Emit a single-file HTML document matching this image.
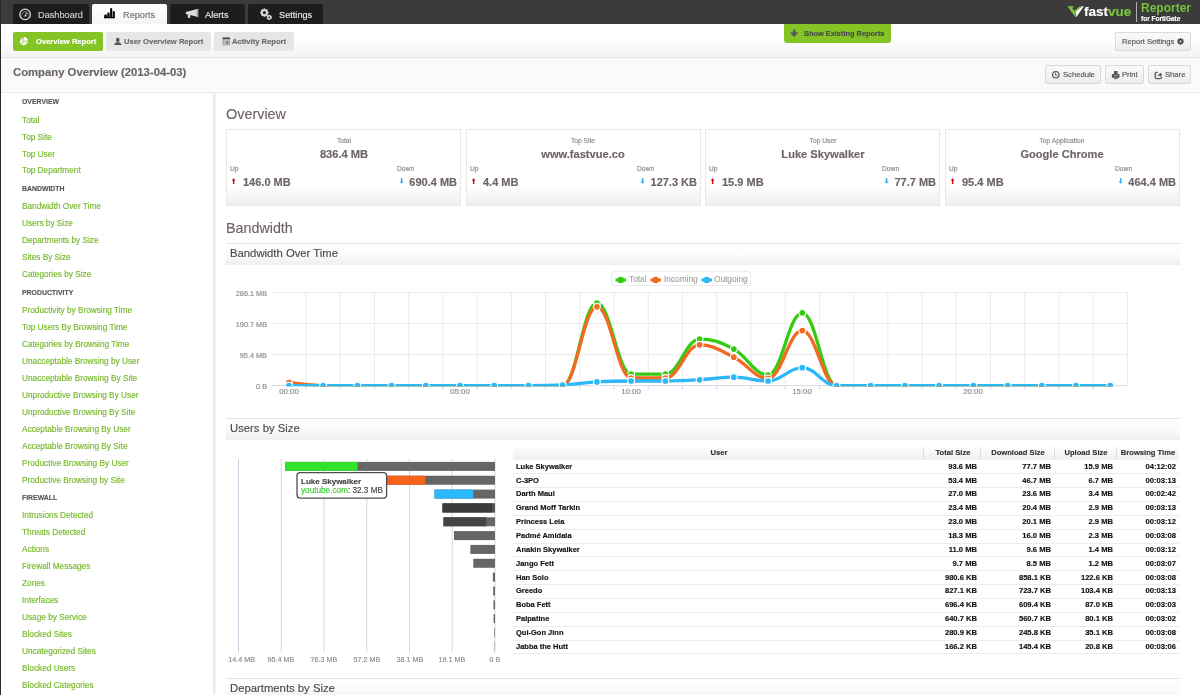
<!DOCTYPE html>
<html><head><meta charset="utf-8"><title>Fastvue Reporter</title>
<style>
html,body{margin:0;padding:0;}
body{width:1200px;height:695px;overflow:hidden;position:relative;background:#fff;font-family:"Liberation Sans", sans-serif;}
.t{position:absolute;white-space:nowrap;-webkit-text-stroke:0.15px currentColor;will-change:transform;}
.b{position:absolute;box-sizing:border-box;}
svg{position:absolute;left:0;top:0;}
</style></head><body>

<div class="b" style="left:0.00px;top:0.00px;width:1200.00px;height:24.00px;background:#3b3b3b;"></div>
<div class="b" style="left:13.00px;top:4.00px;width:76.00px;height:20.00px;background:#1d1d1d;border-radius:2px 2px 0 0;"></div>
<div class="b" style="left:92.00px;top:4.00px;width:75.00px;height:21.00px;background:linear-gradient(#ffffff,#f4f4f4);border-radius:2px 2px 0 0;"></div>
<div class="b" style="left:170.00px;top:4.00px;width:75.00px;height:20.00px;background:#1d1d1d;border-radius:2px 2px 0 0;"></div>
<div class="b" style="left:248.00px;top:4.00px;width:75.00px;height:20.00px;background:#1d1d1d;border-radius:2px 2px 0 0;"></div>
<div class="t" style="left:37.50px;top:8.77px;width:600px;font-size:9.2px;line-height:12.88px;color:#cfcfcf;font-weight:normal;text-align:left;">Dashboard</div>
<div class="t" style="left:123.00px;top:8.77px;width:600px;font-size:9.2px;line-height:12.88px;color:#7a7270;font-weight:normal;text-align:left;">Reports</div>
<div class="t" style="left:205.30px;top:8.77px;width:600px;font-size:9.2px;line-height:12.88px;color:#e6e6e6;font-weight:normal;text-align:left;">Alerts</div>
<div class="t" style="left:278.70px;top:8.77px;width:600px;font-size:9.2px;line-height:12.88px;color:#e6e6e6;font-weight:normal;text-align:left;">Settings</div>
<div class="b" style="left:0.00px;top:24.00px;width:1200.00px;height:33.50px;background:linear-gradient(#ffffff 0%,#ffffff 40%,#f3f3f3 100%);"></div>
<div class="b" style="left:0.00px;top:57.00px;width:1200.00px;height:1.00px;background:#e3e3e3;"></div>
<div class="b" style="left:12.60px;top:32.00px;width:90.60px;height:19.00px;background:#84c424;border-radius:2px;"></div>
<div class="t" style="left:35.50px;top:36.65px;width:600px;font-size:7.6px;line-height:10.64px;color:#ffffff;font-weight:bold;text-align:left;">Overview Report</div>
<div class="b" style="left:106.00px;top:32.00px;width:105.30px;height:19.00px;background:#e6e6e6;border-radius:2px;"></div>
<div class="t" style="left:124.00px;top:36.65px;width:600px;font-size:7.6px;line-height:10.64px;color:#6a6a6a;font-weight:bold;text-align:left;">User Overview Report</div>
<div class="b" style="left:214.00px;top:32.00px;width:79.70px;height:19.00px;background:#e6e6e6;border-radius:2px;"></div>
<div class="t" style="left:232.30px;top:36.65px;width:600px;font-size:7.6px;line-height:10.64px;color:#6a6a6a;font-weight:bold;text-align:left;">Activity Report</div>
<div class="b" style="left:784.00px;top:24.00px;width:106.80px;height:18.80px;background:#84c424;border-radius:0 0 3px 3px;"></div>
<div class="t" style="left:803.80px;top:29.06px;width:600px;font-size:7.4px;line-height:10.36px;color:#4a4a4a;font-weight:bold;text-align:left;">Show Existing Reports</div>
<div class="b" style="left:1115.30px;top:32.40px;width:75.50px;height:18.40px;background:linear-gradient(#fafafa,#ececec);border:1px solid #d9d9d9;border-radius:2px;"></div>
<div class="t" style="left:1121.80px;top:36.65px;width:600px;font-size:7.6px;line-height:10.64px;color:#555;font-weight:normal;text-align:left;">Report Settings</div>
<div class="b" style="left:0.00px;top:58.00px;width:1200.00px;height:34.50px;background:#fafafa;"></div>
<div class="b" style="left:0.00px;top:92.00px;width:1200.00px;height:1.00px;background:#ebebeb;"></div>
<div class="t" style="left:13.00px;top:65.27px;width:600px;font-size:11.3px;line-height:15.82px;color:#6d6563;font-weight:bold;text-align:left;">Company Overview (2013-04-03)</div>
<div class="b" style="left:1045.30px;top:65.40px;width:55.50px;height:18.40px;background:linear-gradient(#fafafa,#ececec);border:1px solid #d9d9d9;border-radius:2px;"></div>
<div class="t" style="left:1062.60px;top:69.59px;width:600px;font-size:7.65px;line-height:10.71px;color:#555;font-weight:normal;text-align:left;">Schedule</div>
<div class="b" style="left:1105.00px;top:65.40px;width:38.70px;height:18.40px;background:linear-gradient(#fafafa,#ececec);border:1px solid #d9d9d9;border-radius:2px;"></div>
<div class="t" style="left:1121.80px;top:69.59px;width:600px;font-size:7.65px;line-height:10.71px;color:#555;font-weight:normal;text-align:left;">Print</div>
<div class="b" style="left:1148.30px;top:65.40px;width:43.20px;height:18.40px;background:linear-gradient(#fafafa,#ececec);border:1px solid #d9d9d9;border-radius:2px;"></div>
<div class="t" style="left:1164.60px;top:69.59px;width:600px;font-size:7.65px;line-height:10.71px;color:#555;font-weight:normal;text-align:left;">Share</div>
<div class="b" style="left:0.00px;top:93.00px;width:213.00px;height:602.00px;background:#ffffff;"></div>
<div class="b" style="left:213.00px;top:93.00px;width:4.00px;height:602.00px;background:linear-gradient(90deg,#e3e3e3,#f1f1f1 50%,#ffffff);"></div>
<div class="b" style="left:0.00px;top:0.00px;width:1.30px;height:695.00px;background:#2a2a2a;"></div>
<div class="t" style="left:22.00px;top:97.08px;width:600px;font-size:6.9px;line-height:9.66px;color:#5a5556;font-weight:bold;text-align:left;">OVERVIEW</div>
<div class="t" style="left:22.00px;top:114.62px;width:600px;font-size:8.25px;line-height:11.55px;color:#76b82a;font-weight:normal;text-align:left;">Total</div>
<div class="t" style="left:22.00px;top:131.57px;width:600px;font-size:8.25px;line-height:11.55px;color:#76b82a;font-weight:normal;text-align:left;">Top Site</div>
<div class="t" style="left:22.00px;top:148.52px;width:600px;font-size:8.25px;line-height:11.55px;color:#76b82a;font-weight:normal;text-align:left;">Top User</div>
<div class="t" style="left:22.00px;top:165.47px;width:600px;font-size:8.25px;line-height:11.55px;color:#76b82a;font-weight:normal;text-align:left;">Top Department</div>
<div class="t" style="left:22.00px;top:183.83px;width:600px;font-size:6.9px;line-height:9.66px;color:#5a5556;font-weight:bold;text-align:left;">BANDWIDTH</div>
<div class="t" style="left:22.00px;top:201.37px;width:600px;font-size:8.25px;line-height:11.55px;color:#76b82a;font-weight:normal;text-align:left;">Bandwidth Over Time</div>
<div class="t" style="left:22.00px;top:218.32px;width:600px;font-size:8.25px;line-height:11.55px;color:#76b82a;font-weight:normal;text-align:left;">Users by Size</div>
<div class="t" style="left:22.00px;top:235.27px;width:600px;font-size:8.25px;line-height:11.55px;color:#76b82a;font-weight:normal;text-align:left;">Departments by Size</div>
<div class="t" style="left:22.00px;top:252.22px;width:600px;font-size:8.25px;line-height:11.55px;color:#76b82a;font-weight:normal;text-align:left;">Sites By Size</div>
<div class="t" style="left:22.00px;top:269.17px;width:600px;font-size:8.25px;line-height:11.55px;color:#76b82a;font-weight:normal;text-align:left;">Categories by Size</div>
<div class="t" style="left:22.00px;top:287.53px;width:600px;font-size:6.9px;line-height:9.66px;color:#5a5556;font-weight:bold;text-align:left;">PRODUCTIVITY</div>
<div class="t" style="left:22.00px;top:305.07px;width:600px;font-size:8.25px;line-height:11.55px;color:#76b82a;font-weight:normal;text-align:left;">Productivity by Browsing Time</div>
<div class="t" style="left:22.00px;top:322.02px;width:600px;font-size:8.25px;line-height:11.55px;color:#76b82a;font-weight:normal;text-align:left;">Top Users By Browsing Time</div>
<div class="t" style="left:22.00px;top:338.97px;width:600px;font-size:8.25px;line-height:11.55px;color:#76b82a;font-weight:normal;text-align:left;">Categories by Browsing Time</div>
<div class="t" style="left:22.00px;top:355.92px;width:600px;font-size:8.25px;line-height:11.55px;color:#76b82a;font-weight:normal;text-align:left;">Unacceptable Browsing by User</div>
<div class="t" style="left:22.00px;top:372.87px;width:600px;font-size:8.25px;line-height:11.55px;color:#76b82a;font-weight:normal;text-align:left;">Unacceptable Browsing By Site</div>
<div class="t" style="left:22.00px;top:389.82px;width:600px;font-size:8.25px;line-height:11.55px;color:#76b82a;font-weight:normal;text-align:left;">Unproductive Browsing By User</div>
<div class="t" style="left:22.00px;top:406.77px;width:600px;font-size:8.25px;line-height:11.55px;color:#76b82a;font-weight:normal;text-align:left;">Unproductive Browsing By Site</div>
<div class="t" style="left:22.00px;top:423.72px;width:600px;font-size:8.25px;line-height:11.55px;color:#76b82a;font-weight:normal;text-align:left;">Acceptable Browsing By User</div>
<div class="t" style="left:22.00px;top:440.67px;width:600px;font-size:8.25px;line-height:11.55px;color:#76b82a;font-weight:normal;text-align:left;">Acceptable Browsing By Site</div>
<div class="t" style="left:22.00px;top:457.62px;width:600px;font-size:8.25px;line-height:11.55px;color:#76b82a;font-weight:normal;text-align:left;">Productive Browsing By User</div>
<div class="t" style="left:22.00px;top:474.57px;width:600px;font-size:8.25px;line-height:11.55px;color:#76b82a;font-weight:normal;text-align:left;">Productive Browsing by Site</div>
<div class="t" style="left:22.00px;top:492.93px;width:600px;font-size:6.9px;line-height:9.66px;color:#5a5556;font-weight:bold;text-align:left;">FIREWALL</div>
<div class="t" style="left:22.00px;top:510.47px;width:600px;font-size:8.25px;line-height:11.55px;color:#76b82a;font-weight:normal;text-align:left;">Intrusions Detected</div>
<div class="t" style="left:22.00px;top:527.42px;width:600px;font-size:8.25px;line-height:11.55px;color:#76b82a;font-weight:normal;text-align:left;">Threats Detected</div>
<div class="t" style="left:22.00px;top:544.37px;width:600px;font-size:8.25px;line-height:11.55px;color:#76b82a;font-weight:normal;text-align:left;">Actions</div>
<div class="t" style="left:22.00px;top:561.32px;width:600px;font-size:8.25px;line-height:11.55px;color:#76b82a;font-weight:normal;text-align:left;">Firewall Messages</div>
<div class="t" style="left:22.00px;top:578.27px;width:600px;font-size:8.25px;line-height:11.55px;color:#76b82a;font-weight:normal;text-align:left;">Zones</div>
<div class="t" style="left:22.00px;top:595.22px;width:600px;font-size:8.25px;line-height:11.55px;color:#76b82a;font-weight:normal;text-align:left;">Interfaces</div>
<div class="t" style="left:22.00px;top:612.17px;width:600px;font-size:8.25px;line-height:11.55px;color:#76b82a;font-weight:normal;text-align:left;">Usage by Service</div>
<div class="t" style="left:22.00px;top:629.12px;width:600px;font-size:8.25px;line-height:11.55px;color:#76b82a;font-weight:normal;text-align:left;">Blocked Sites</div>
<div class="t" style="left:22.00px;top:646.07px;width:600px;font-size:8.25px;line-height:11.55px;color:#76b82a;font-weight:normal;text-align:left;">Uncategorized Sites</div>
<div class="t" style="left:22.00px;top:663.02px;width:600px;font-size:8.25px;line-height:11.55px;color:#76b82a;font-weight:normal;text-align:left;">Blocked Users</div>
<div class="t" style="left:22.00px;top:679.97px;width:600px;font-size:8.25px;line-height:11.55px;color:#76b82a;font-weight:normal;text-align:left;">Blocked Categories</div>
<div class="t" style="left:226.30px;top:103.73px;width:600px;font-size:14.4px;line-height:20.16px;color:#6d6563;font-weight:normal;text-align:left;">Overview</div>
<div class="b" style="left:226.00px;top:129.30px;width:235.00px;height:76.50px;background:linear-gradient(#ffffff 0%,#ffffff 74%,#efefef 100%);border:1px solid #e8e8e8;"></div>
<div class="t" style="left:243.50px;top:136.39px;width:200px;font-size:6.7px;line-height:9.38px;color:#8a8a8a;font-weight:normal;text-align:center;">Total</div>
<div class="t" style="left:233.50px;top:146.88px;width:220px;font-size:11.1px;line-height:15.54px;color:#6d6563;font-weight:bold;text-align:center;">836.4 MB</div>
<div class="t" style="left:230.00px;top:164.49px;width:600px;font-size:6.7px;line-height:9.38px;color:#8a8a8a;font-weight:normal;text-align:left;">Up</div>
<div class="t" style="left:243.20px;top:174.69px;width:600px;font-size:11.0px;line-height:15.4px;color:#6d6563;font-weight:bold;text-align:left;">146.0 MB</div>
<svg width="6" height="7" style="left:231.2px;top:177.8px"><path d="M2.6 0.2 L4.6 2.6 L3.3 2.6 L3.3 6 L1.9 6 L1.9 2.6 L0.6 2.6 Z" fill="#d40000"/></svg>
<div class="t" style="left:257.00px;top:174.69px;width:200px;font-size:11.0px;line-height:15.4px;color:#6d6563;font-weight:bold;text-align:right;">690.4 MB</div>
<div class="t" style="left:396.61px;top:164.29px;width:600px;font-size:6.7px;line-height:9.38px;color:#8a8a8a;font-weight:normal;text-align:left;">Down</div>
<svg width="6" height="7" style="left:399.2px;top:178.2px"><path d="M2.6 5.8 L4.6 3.4 L3.3 3.4 L3.3 0 L1.9 0 L1.9 3.4 L0.6 3.4 Z" fill="#35aaf0"/></svg>
<div class="b" style="left:465.50px;top:129.30px;width:235.00px;height:76.50px;background:linear-gradient(#ffffff 0%,#ffffff 74%,#efefef 100%);border:1px solid #e8e8e8;"></div>
<div class="t" style="left:483.00px;top:136.39px;width:200px;font-size:6.7px;line-height:9.38px;color:#8a8a8a;font-weight:normal;text-align:center;">Top Site</div>
<div class="t" style="left:473.00px;top:146.88px;width:220px;font-size:11.1px;line-height:15.54px;color:#6d6563;font-weight:bold;text-align:center;">www.fastvue.co</div>
<div class="t" style="left:469.50px;top:164.49px;width:600px;font-size:6.7px;line-height:9.38px;color:#8a8a8a;font-weight:normal;text-align:left;">Up</div>
<div class="t" style="left:482.70px;top:174.69px;width:600px;font-size:11.0px;line-height:15.4px;color:#6d6563;font-weight:bold;text-align:left;">4.4 MB</div>
<svg width="6" height="7" style="left:470.7px;top:177.8px"><path d="M2.6 0.2 L4.6 2.6 L3.3 2.6 L3.3 6 L1.9 6 L1.9 2.6 L0.6 2.6 Z" fill="#d40000"/></svg>
<div class="t" style="left:496.50px;top:174.69px;width:200px;font-size:11.0px;line-height:15.4px;color:#6d6563;font-weight:bold;text-align:right;">127.3 KB</div>
<div class="t" style="left:637.33px;top:164.29px;width:600px;font-size:6.7px;line-height:9.38px;color:#8a8a8a;font-weight:normal;text-align:left;">Down</div>
<svg width="6" height="7" style="left:639.9px;top:178.2px"><path d="M2.6 5.8 L4.6 3.4 L3.3 3.4 L3.3 0 L1.9 0 L1.9 3.4 L0.6 3.4 Z" fill="#35aaf0"/></svg>
<div class="b" style="left:705.00px;top:129.30px;width:235.00px;height:76.50px;background:linear-gradient(#ffffff 0%,#ffffff 74%,#efefef 100%);border:1px solid #e8e8e8;"></div>
<div class="t" style="left:722.50px;top:136.39px;width:200px;font-size:6.7px;line-height:9.38px;color:#8a8a8a;font-weight:normal;text-align:center;">Top User</div>
<div class="t" style="left:712.50px;top:146.88px;width:220px;font-size:11.1px;line-height:15.54px;color:#6d6563;font-weight:bold;text-align:center;">Luke Skywalker</div>
<div class="t" style="left:709.00px;top:164.49px;width:600px;font-size:6.7px;line-height:9.38px;color:#8a8a8a;font-weight:normal;text-align:left;">Up</div>
<div class="t" style="left:722.20px;top:174.69px;width:600px;font-size:11.0px;line-height:15.4px;color:#6d6563;font-weight:bold;text-align:left;">15.9 MB</div>
<svg width="6" height="7" style="left:710.2px;top:177.8px"><path d="M2.6 0.2 L4.6 2.6 L3.3 2.6 L3.3 6 L1.9 6 L1.9 2.6 L0.6 2.6 Z" fill="#d40000"/></svg>
<div class="t" style="left:736.00px;top:174.69px;width:200px;font-size:11.0px;line-height:15.4px;color:#6d6563;font-weight:bold;text-align:right;">77.7 MB</div>
<div class="t" style="left:881.73px;top:164.29px;width:600px;font-size:6.7px;line-height:9.38px;color:#8a8a8a;font-weight:normal;text-align:left;">Down</div>
<svg width="6" height="7" style="left:884.3px;top:178.2px"><path d="M2.6 5.8 L4.6 3.4 L3.3 3.4 L3.3 0 L1.9 0 L1.9 3.4 L0.6 3.4 Z" fill="#35aaf0"/></svg>
<div class="b" style="left:944.50px;top:129.30px;width:235.00px;height:76.50px;background:linear-gradient(#ffffff 0%,#ffffff 74%,#efefef 100%);border:1px solid #e8e8e8;"></div>
<div class="t" style="left:962.00px;top:136.39px;width:200px;font-size:6.7px;line-height:9.38px;color:#8a8a8a;font-weight:normal;text-align:center;">Top Application</div>
<div class="t" style="left:952.00px;top:146.88px;width:220px;font-size:11.1px;line-height:15.54px;color:#6d6563;font-weight:bold;text-align:center;">Google Chrome</div>
<div class="t" style="left:948.50px;top:164.49px;width:600px;font-size:6.7px;line-height:9.38px;color:#8a8a8a;font-weight:normal;text-align:left;">Up</div>
<div class="t" style="left:961.70px;top:174.69px;width:600px;font-size:11.0px;line-height:15.4px;color:#6d6563;font-weight:bold;text-align:left;">95.4 MB</div>
<svg width="6" height="7" style="left:949.7px;top:177.8px"><path d="M2.6 0.2 L4.6 2.6 L3.3 2.6 L3.3 6 L1.9 6 L1.9 2.6 L0.6 2.6 Z" fill="#d40000"/></svg>
<div class="t" style="left:975.50px;top:174.69px;width:200px;font-size:11.0px;line-height:15.4px;color:#6d6563;font-weight:bold;text-align:right;">464.4 MB</div>
<div class="t" style="left:1115.11px;top:164.29px;width:600px;font-size:6.7px;line-height:9.38px;color:#8a8a8a;font-weight:normal;text-align:left;">Down</div>
<svg width="6" height="7" style="left:1117.7px;top:178.2px"><path d="M2.6 5.8 L4.6 3.4 L3.3 3.4 L3.3 0 L1.9 0 L1.9 3.4 L0.6 3.4 Z" fill="#35aaf0"/></svg>
<div class="t" style="left:226.40px;top:218.34px;width:600px;font-size:14.3px;line-height:20.02px;color:#6d6563;font-weight:normal;text-align:left;">Bandwidth</div>
<div class="b" style="left:226.00px;top:243.40px;width:954.00px;height:21.20px;background:linear-gradient(#ffffff 0%,#fbfbfb 50%,#efefef 100%);border-top:1px solid #e4e4e4;"></div>
<div class="t" style="left:229.50px;top:245.97px;width:600px;font-size:11.3px;line-height:15.82px;color:#4a4a4a;font-weight:normal;text-align:left;">Bandwidth Over Time</div>
<div class="b" style="left:226.00px;top:418.30px;width:954.00px;height:21.40px;background:linear-gradient(#ffffff 0%,#fbfbfb 50%,#efefef 100%);border-top:1px solid #e4e4e4;"></div>
<div class="t" style="left:229.50px;top:420.87px;width:600px;font-size:11.3px;line-height:15.82px;color:#4a4a4a;font-weight:normal;text-align:left;">Users by Size</div>
<div class="b" style="left:226.00px;top:677.90px;width:954.00px;height:22.10px;background:linear-gradient(#ffffff 0%,#fbfbfb 50%,#efefef 100%);border-top:1px solid #e4e4e4;"></div>
<div class="t" style="left:229.50px;top:681.37px;width:600px;font-size:11.3px;line-height:15.82px;color:#4a4a4a;font-weight:normal;text-align:left;">Departments by Size</div>
<svg width="1200" height="695" style="left:0;top:0">
<defs><clipPath id="pc"><rect x="271.8" y="270" width="856" height="116.2"/></clipPath></defs>
<line x1="306.02" y1="292.5" x2="306.02" y2="385.6" stroke="#ebebeb" stroke-width="1"/>
<line x1="340.25" y1="292.5" x2="340.25" y2="385.6" stroke="#ebebeb" stroke-width="1"/>
<line x1="374.47" y1="292.5" x2="374.47" y2="385.6" stroke="#ebebeb" stroke-width="1"/>
<line x1="408.70" y1="292.5" x2="408.70" y2="385.6" stroke="#ebebeb" stroke-width="1"/>
<line x1="442.92" y1="292.5" x2="442.92" y2="385.6" stroke="#ebebeb" stroke-width="1"/>
<line x1="477.14" y1="292.5" x2="477.14" y2="385.6" stroke="#ebebeb" stroke-width="1"/>
<line x1="511.37" y1="292.5" x2="511.37" y2="385.6" stroke="#ebebeb" stroke-width="1"/>
<line x1="545.59" y1="292.5" x2="545.59" y2="385.6" stroke="#ebebeb" stroke-width="1"/>
<line x1="579.82" y1="292.5" x2="579.82" y2="385.6" stroke="#ebebeb" stroke-width="1"/>
<line x1="614.04" y1="292.5" x2="614.04" y2="385.6" stroke="#ebebeb" stroke-width="1"/>
<line x1="648.26" y1="292.5" x2="648.26" y2="385.6" stroke="#ebebeb" stroke-width="1"/>
<line x1="682.49" y1="292.5" x2="682.49" y2="385.6" stroke="#ebebeb" stroke-width="1"/>
<line x1="716.71" y1="292.5" x2="716.71" y2="385.6" stroke="#ebebeb" stroke-width="1"/>
<line x1="750.94" y1="292.5" x2="750.94" y2="385.6" stroke="#ebebeb" stroke-width="1"/>
<line x1="785.16" y1="292.5" x2="785.16" y2="385.6" stroke="#ebebeb" stroke-width="1"/>
<line x1="819.38" y1="292.5" x2="819.38" y2="385.6" stroke="#ebebeb" stroke-width="1"/>
<line x1="853.61" y1="292.5" x2="853.61" y2="385.6" stroke="#ebebeb" stroke-width="1"/>
<line x1="887.83" y1="292.5" x2="887.83" y2="385.6" stroke="#ebebeb" stroke-width="1"/>
<line x1="922.06" y1="292.5" x2="922.06" y2="385.6" stroke="#ebebeb" stroke-width="1"/>
<line x1="956.28" y1="292.5" x2="956.28" y2="385.6" stroke="#ebebeb" stroke-width="1"/>
<line x1="990.50" y1="292.5" x2="990.50" y2="385.6" stroke="#ebebeb" stroke-width="1"/>
<line x1="1024.73" y1="292.5" x2="1024.73" y2="385.6" stroke="#ebebeb" stroke-width="1"/>
<line x1="1058.95" y1="292.5" x2="1058.95" y2="385.6" stroke="#ebebeb" stroke-width="1"/>
<line x1="1093.18" y1="292.5" x2="1093.18" y2="385.6" stroke="#ebebeb" stroke-width="1"/>
<line x1="1127.40" y1="292.5" x2="1127.40" y2="385.6" stroke="#ebebeb" stroke-width="1"/>
<line x1="271.8" y1="292.50" x2="1127.4" y2="292.50" stroke="#ebebeb" stroke-width="1"/>
<line x1="271.8" y1="323.53" x2="1127.4" y2="323.53" stroke="#ebebeb" stroke-width="1"/>
<line x1="271.8" y1="354.57" x2="1127.4" y2="354.57" stroke="#ebebeb" stroke-width="1"/>
<line x1="271.8" y1="385.6" x2="1127.4" y2="385.6" stroke="#d0dbe6" stroke-width="1"/>
<line x1="306.02" y1="385.6" x2="306.02" y2="389.6" stroke="#d0dbe6" stroke-width="1"/>
<line x1="340.25" y1="385.6" x2="340.25" y2="389.6" stroke="#d0dbe6" stroke-width="1"/>
<line x1="374.47" y1="385.6" x2="374.47" y2="389.6" stroke="#d0dbe6" stroke-width="1"/>
<line x1="408.70" y1="385.6" x2="408.70" y2="389.6" stroke="#d0dbe6" stroke-width="1"/>
<line x1="442.92" y1="385.6" x2="442.92" y2="389.6" stroke="#d0dbe6" stroke-width="1"/>
<line x1="477.14" y1="385.6" x2="477.14" y2="389.6" stroke="#d0dbe6" stroke-width="1"/>
<line x1="511.37" y1="385.6" x2="511.37" y2="389.6" stroke="#d0dbe6" stroke-width="1"/>
<line x1="545.59" y1="385.6" x2="545.59" y2="389.6" stroke="#d0dbe6" stroke-width="1"/>
<line x1="579.82" y1="385.6" x2="579.82" y2="389.6" stroke="#d0dbe6" stroke-width="1"/>
<line x1="614.04" y1="385.6" x2="614.04" y2="389.6" stroke="#d0dbe6" stroke-width="1"/>
<line x1="648.26" y1="385.6" x2="648.26" y2="389.6" stroke="#d0dbe6" stroke-width="1"/>
<line x1="682.49" y1="385.6" x2="682.49" y2="389.6" stroke="#d0dbe6" stroke-width="1"/>
<line x1="716.71" y1="385.6" x2="716.71" y2="389.6" stroke="#d0dbe6" stroke-width="1"/>
<line x1="750.94" y1="385.6" x2="750.94" y2="389.6" stroke="#d0dbe6" stroke-width="1"/>
<line x1="785.16" y1="385.6" x2="785.16" y2="389.6" stroke="#d0dbe6" stroke-width="1"/>
<line x1="819.38" y1="385.6" x2="819.38" y2="389.6" stroke="#d0dbe6" stroke-width="1"/>
<line x1="853.61" y1="385.6" x2="853.61" y2="389.6" stroke="#d0dbe6" stroke-width="1"/>
<line x1="887.83" y1="385.6" x2="887.83" y2="389.6" stroke="#d0dbe6" stroke-width="1"/>
<line x1="922.06" y1="385.6" x2="922.06" y2="389.6" stroke="#d0dbe6" stroke-width="1"/>
<line x1="956.28" y1="385.6" x2="956.28" y2="389.6" stroke="#d0dbe6" stroke-width="1"/>
<line x1="990.50" y1="385.6" x2="990.50" y2="389.6" stroke="#d0dbe6" stroke-width="1"/>
<line x1="1024.73" y1="385.6" x2="1024.73" y2="389.6" stroke="#d0dbe6" stroke-width="1"/>
<line x1="1058.95" y1="385.6" x2="1058.95" y2="389.6" stroke="#d0dbe6" stroke-width="1"/>
<line x1="1093.18" y1="385.6" x2="1093.18" y2="389.6" stroke="#d0dbe6" stroke-width="1"/>
<g clip-path="url(#pc)">
<path d="M 288.91 383.00 C 288.91 383.00 309.45 385.60 323.14 385.60 C 336.83 385.60 343.67 385.60 357.36 385.60 C 371.05 385.60 377.89 385.60 391.58 385.60 C 405.27 385.60 412.12 385.60 425.81 385.60 C 439.50 385.60 446.34 385.60 460.03 385.60 C 473.72 385.60 480.57 385.60 494.26 385.60 C 507.95 385.60 514.79 385.60 528.48 385.60 C 542.17 385.60 549.01 385.60 562.70 385.60 C 576.39 385.60 583.24 303.00 596.93 303.00 C 610.62 303.00 617.46 374.10 631.15 374.10 C 644.84 374.10 651.69 374.10 665.38 374.10 C 679.07 374.10 685.91 339.10 699.60 339.10 C 713.29 339.10 720.13 341.92 733.82 349.10 C 747.51 356.28 754.36 375.00 768.05 375.00 C 781.74 375.00 788.58 312.80 802.27 312.80 C 815.96 312.80 822.81 385.60 836.50 385.60 C 850.19 385.60 857.03 385.60 870.72 385.60 C 884.41 385.60 891.25 385.60 904.94 385.60 C 918.63 385.60 925.48 385.60 939.17 385.60 C 952.86 385.60 959.70 385.60 973.39 385.60 C 987.08 385.60 993.93 385.60 1007.62 385.60 C 1021.31 385.60 1028.15 385.60 1041.84 385.60 C 1055.53 385.60 1062.37 385.60 1076.06 385.60 C 1089.75 385.60 1110.29 385.60 1110.29 385.60" fill="none" stroke="#33cc11" stroke-width="3.3" stroke-linejoin="round" stroke-linecap="round"/>
<circle cx="288.91" cy="383.00" r="3.4" fill="#33cc11" stroke="#fff" stroke-width="1.1"/>
<circle cx="323.14" cy="385.60" r="3.4" fill="#33cc11" stroke="#fff" stroke-width="1.1"/>
<circle cx="357.36" cy="385.60" r="3.4" fill="#33cc11" stroke="#fff" stroke-width="1.1"/>
<circle cx="391.58" cy="385.60" r="3.4" fill="#33cc11" stroke="#fff" stroke-width="1.1"/>
<circle cx="425.81" cy="385.60" r="3.4" fill="#33cc11" stroke="#fff" stroke-width="1.1"/>
<circle cx="460.03" cy="385.60" r="3.4" fill="#33cc11" stroke="#fff" stroke-width="1.1"/>
<circle cx="494.26" cy="385.60" r="3.4" fill="#33cc11" stroke="#fff" stroke-width="1.1"/>
<circle cx="528.48" cy="385.60" r="3.4" fill="#33cc11" stroke="#fff" stroke-width="1.1"/>
<circle cx="562.70" cy="385.60" r="3.4" fill="#33cc11" stroke="#fff" stroke-width="1.1"/>
<circle cx="596.93" cy="303.00" r="3.4" fill="#33cc11" stroke="#fff" stroke-width="1.1"/>
<circle cx="631.15" cy="374.10" r="3.4" fill="#33cc11" stroke="#fff" stroke-width="1.1"/>
<circle cx="665.38" cy="374.10" r="3.4" fill="#33cc11" stroke="#fff" stroke-width="1.1"/>
<circle cx="699.60" cy="339.10" r="3.4" fill="#33cc11" stroke="#fff" stroke-width="1.1"/>
<circle cx="733.82" cy="349.10" r="3.4" fill="#33cc11" stroke="#fff" stroke-width="1.1"/>
<circle cx="768.05" cy="375.00" r="3.4" fill="#33cc11" stroke="#fff" stroke-width="1.1"/>
<circle cx="802.27" cy="312.80" r="3.4" fill="#33cc11" stroke="#fff" stroke-width="1.1"/>
<circle cx="836.50" cy="385.60" r="3.4" fill="#33cc11" stroke="#fff" stroke-width="1.1"/>
<circle cx="870.72" cy="385.60" r="3.4" fill="#33cc11" stroke="#fff" stroke-width="1.1"/>
<circle cx="904.94" cy="385.60" r="3.4" fill="#33cc11" stroke="#fff" stroke-width="1.1"/>
<circle cx="939.17" cy="385.60" r="3.4" fill="#33cc11" stroke="#fff" stroke-width="1.1"/>
<circle cx="973.39" cy="385.60" r="3.4" fill="#33cc11" stroke="#fff" stroke-width="1.1"/>
<circle cx="1007.62" cy="385.60" r="3.4" fill="#33cc11" stroke="#fff" stroke-width="1.1"/>
<circle cx="1041.84" cy="385.60" r="3.4" fill="#33cc11" stroke="#fff" stroke-width="1.1"/>
<circle cx="1076.06" cy="385.60" r="3.4" fill="#33cc11" stroke="#fff" stroke-width="1.1"/>
<circle cx="1110.29" cy="385.60" r="3.4" fill="#33cc11" stroke="#fff" stroke-width="1.1"/>
<path d="M 288.91 382.50 C 288.91 382.50 309.45 385.60 323.14 385.60 C 336.83 385.60 343.67 385.60 357.36 385.60 C 371.05 385.60 377.89 385.60 391.58 385.60 C 405.27 385.60 412.12 385.60 425.81 385.60 C 439.50 385.60 446.34 385.60 460.03 385.60 C 473.72 385.60 480.57 385.60 494.26 385.60 C 507.95 385.60 514.79 385.60 528.48 385.60 C 542.17 385.60 549.01 385.60 562.70 385.60 C 576.39 385.60 583.24 306.80 596.93 306.80 C 610.62 306.80 617.46 378.00 631.15 378.00 C 644.84 378.00 651.69 378.00 665.38 378.00 C 679.07 378.00 685.91 344.80 699.60 344.80 C 713.29 344.80 720.13 350.48 733.82 357.20 C 747.51 363.92 754.36 378.40 768.05 378.40 C 781.74 378.40 788.58 330.60 802.27 330.60 C 815.96 330.60 822.81 385.60 836.50 385.60 C 850.19 385.60 857.03 385.60 870.72 385.60 C 884.41 385.60 891.25 385.60 904.94 385.60 C 918.63 385.60 925.48 385.60 939.17 385.60 C 952.86 385.60 959.70 385.60 973.39 385.60 C 987.08 385.60 993.93 385.60 1007.62 385.60 C 1021.31 385.60 1028.15 385.60 1041.84 385.60 C 1055.53 385.60 1062.37 385.60 1076.06 385.60 C 1089.75 385.60 1110.29 385.60 1110.29 385.60" fill="none" stroke="#f26a21" stroke-width="3.3" stroke-linejoin="round" stroke-linecap="round"/>
<circle cx="288.91" cy="382.50" r="3.4" fill="#f26a21" stroke="#fff" stroke-width="1.1"/>
<circle cx="323.14" cy="385.60" r="3.4" fill="#f26a21" stroke="#fff" stroke-width="1.1"/>
<circle cx="357.36" cy="385.60" r="3.4" fill="#f26a21" stroke="#fff" stroke-width="1.1"/>
<circle cx="391.58" cy="385.60" r="3.4" fill="#f26a21" stroke="#fff" stroke-width="1.1"/>
<circle cx="425.81" cy="385.60" r="3.4" fill="#f26a21" stroke="#fff" stroke-width="1.1"/>
<circle cx="460.03" cy="385.60" r="3.4" fill="#f26a21" stroke="#fff" stroke-width="1.1"/>
<circle cx="494.26" cy="385.60" r="3.4" fill="#f26a21" stroke="#fff" stroke-width="1.1"/>
<circle cx="528.48" cy="385.60" r="3.4" fill="#f26a21" stroke="#fff" stroke-width="1.1"/>
<circle cx="562.70" cy="385.60" r="3.4" fill="#f26a21" stroke="#fff" stroke-width="1.1"/>
<circle cx="596.93" cy="306.80" r="3.4" fill="#f26a21" stroke="#fff" stroke-width="1.1"/>
<circle cx="631.15" cy="378.00" r="3.4" fill="#f26a21" stroke="#fff" stroke-width="1.1"/>
<circle cx="665.38" cy="378.00" r="3.4" fill="#f26a21" stroke="#fff" stroke-width="1.1"/>
<circle cx="699.60" cy="344.80" r="3.4" fill="#f26a21" stroke="#fff" stroke-width="1.1"/>
<circle cx="733.82" cy="357.20" r="3.4" fill="#f26a21" stroke="#fff" stroke-width="1.1"/>
<circle cx="768.05" cy="378.40" r="3.4" fill="#f26a21" stroke="#fff" stroke-width="1.1"/>
<circle cx="802.27" cy="330.60" r="3.4" fill="#f26a21" stroke="#fff" stroke-width="1.1"/>
<circle cx="836.50" cy="385.60" r="3.4" fill="#f26a21" stroke="#fff" stroke-width="1.1"/>
<circle cx="870.72" cy="385.60" r="3.4" fill="#f26a21" stroke="#fff" stroke-width="1.1"/>
<circle cx="904.94" cy="385.60" r="3.4" fill="#f26a21" stroke="#fff" stroke-width="1.1"/>
<circle cx="939.17" cy="385.60" r="3.4" fill="#f26a21" stroke="#fff" stroke-width="1.1"/>
<circle cx="973.39" cy="385.60" r="3.4" fill="#f26a21" stroke="#fff" stroke-width="1.1"/>
<circle cx="1007.62" cy="385.60" r="3.4" fill="#f26a21" stroke="#fff" stroke-width="1.1"/>
<circle cx="1041.84" cy="385.60" r="3.4" fill="#f26a21" stroke="#fff" stroke-width="1.1"/>
<circle cx="1076.06" cy="385.60" r="3.4" fill="#f26a21" stroke="#fff" stroke-width="1.1"/>
<circle cx="1110.29" cy="385.60" r="3.4" fill="#f26a21" stroke="#fff" stroke-width="1.1"/>
<path d="M 288.91 385.60 C 288.91 385.60 309.45 385.60 323.14 385.60 C 336.83 385.60 343.67 385.60 357.36 385.60 C 371.05 385.60 377.89 385.60 391.58 385.60 C 405.27 385.60 412.12 385.60 425.81 385.60 C 439.50 385.60 446.34 385.60 460.03 385.60 C 473.72 385.60 480.57 385.60 494.26 385.60 C 507.95 385.60 514.79 385.60 528.48 385.60 C 542.17 385.60 549.01 385.60 562.70 385.00 C 576.39 384.40 583.24 382.70 596.93 381.90 C 610.62 381.10 617.46 381.00 631.15 381.00 C 644.84 381.00 651.69 381.00 665.38 381.00 C 679.07 381.00 685.91 380.56 699.60 379.80 C 713.29 379.04 720.13 377.20 733.82 377.20 C 747.51 377.20 754.36 381.00 768.05 381.00 C 781.74 381.00 788.58 367.70 802.27 367.70 C 815.96 367.70 822.81 385.60 836.50 385.60 C 850.19 385.60 857.03 385.60 870.72 385.60 C 884.41 385.60 891.25 385.60 904.94 385.60 C 918.63 385.60 925.48 385.60 939.17 385.60 C 952.86 385.60 959.70 385.60 973.39 385.60 C 987.08 385.60 993.93 385.60 1007.62 385.60 C 1021.31 385.60 1028.15 385.60 1041.84 385.60 C 1055.53 385.60 1062.37 385.60 1076.06 385.60 C 1089.75 385.60 1110.29 385.60 1110.29 385.60" fill="none" stroke="#2db8f5" stroke-width="3.3" stroke-linejoin="round" stroke-linecap="round"/>
<circle cx="288.91" cy="385.60" r="3.4" fill="#2db8f5" stroke="#fff" stroke-width="1.1"/>
<circle cx="323.14" cy="385.60" r="3.4" fill="#2db8f5" stroke="#fff" stroke-width="1.1"/>
<circle cx="357.36" cy="385.60" r="3.4" fill="#2db8f5" stroke="#fff" stroke-width="1.1"/>
<circle cx="391.58" cy="385.60" r="3.4" fill="#2db8f5" stroke="#fff" stroke-width="1.1"/>
<circle cx="425.81" cy="385.60" r="3.4" fill="#2db8f5" stroke="#fff" stroke-width="1.1"/>
<circle cx="460.03" cy="385.60" r="3.4" fill="#2db8f5" stroke="#fff" stroke-width="1.1"/>
<circle cx="494.26" cy="385.60" r="3.4" fill="#2db8f5" stroke="#fff" stroke-width="1.1"/>
<circle cx="528.48" cy="385.60" r="3.4" fill="#2db8f5" stroke="#fff" stroke-width="1.1"/>
<circle cx="562.70" cy="385.00" r="3.4" fill="#2db8f5" stroke="#fff" stroke-width="1.1"/>
<circle cx="596.93" cy="381.90" r="3.4" fill="#2db8f5" stroke="#fff" stroke-width="1.1"/>
<circle cx="631.15" cy="381.00" r="3.4" fill="#2db8f5" stroke="#fff" stroke-width="1.1"/>
<circle cx="665.38" cy="381.00" r="3.4" fill="#2db8f5" stroke="#fff" stroke-width="1.1"/>
<circle cx="699.60" cy="379.80" r="3.4" fill="#2db8f5" stroke="#fff" stroke-width="1.1"/>
<circle cx="733.82" cy="377.20" r="3.4" fill="#2db8f5" stroke="#fff" stroke-width="1.1"/>
<circle cx="768.05" cy="381.00" r="3.4" fill="#2db8f5" stroke="#fff" stroke-width="1.1"/>
<circle cx="802.27" cy="367.70" r="3.4" fill="#2db8f5" stroke="#fff" stroke-width="1.1"/>
<circle cx="836.50" cy="385.60" r="3.4" fill="#2db8f5" stroke="#fff" stroke-width="1.1"/>
<circle cx="870.72" cy="385.60" r="3.4" fill="#2db8f5" stroke="#fff" stroke-width="1.1"/>
<circle cx="904.94" cy="385.60" r="3.4" fill="#2db8f5" stroke="#fff" stroke-width="1.1"/>
<circle cx="939.17" cy="385.60" r="3.4" fill="#2db8f5" stroke="#fff" stroke-width="1.1"/>
<circle cx="973.39" cy="385.60" r="3.4" fill="#2db8f5" stroke="#fff" stroke-width="1.1"/>
<circle cx="1007.62" cy="385.60" r="3.4" fill="#2db8f5" stroke="#fff" stroke-width="1.1"/>
<circle cx="1041.84" cy="385.60" r="3.4" fill="#2db8f5" stroke="#fff" stroke-width="1.1"/>
<circle cx="1076.06" cy="385.60" r="3.4" fill="#2db8f5" stroke="#fff" stroke-width="1.1"/>
<circle cx="1110.29" cy="385.60" r="3.4" fill="#2db8f5" stroke="#fff" stroke-width="1.1"/>
</g>
</svg>
<div class="t" style="left:207.00px;top:288.56px;width:60px;font-size:7.3px;line-height:10.22px;color:#8a8a8a;font-weight:normal;text-align:right;">286.1 MB</div>
<div class="t" style="left:207.00px;top:319.59px;width:60px;font-size:7.3px;line-height:10.22px;color:#8a8a8a;font-weight:normal;text-align:right;">190.7 MB</div>
<div class="t" style="left:207.00px;top:350.63px;width:60px;font-size:7.3px;line-height:10.22px;color:#8a8a8a;font-weight:normal;text-align:right;">95.4 MB</div>
<div class="t" style="left:207.00px;top:381.66px;width:60px;font-size:7.3px;line-height:10.22px;color:#8a8a8a;font-weight:normal;text-align:right;">0 B</div>
<div class="t" style="left:268.91px;top:387.04px;width:40px;font-size:7.8px;line-height:10.92px;color:#8a8a8a;font-weight:normal;text-align:center;">00:00</div>
<div class="t" style="left:440.03px;top:387.04px;width:40px;font-size:7.8px;line-height:10.92px;color:#8a8a8a;font-weight:normal;text-align:center;">05:00</div>
<div class="t" style="left:611.15px;top:387.04px;width:40px;font-size:7.8px;line-height:10.92px;color:#8a8a8a;font-weight:normal;text-align:center;">10:00</div>
<div class="t" style="left:782.27px;top:387.04px;width:40px;font-size:7.8px;line-height:10.92px;color:#8a8a8a;font-weight:normal;text-align:center;">15:00</div>
<div class="t" style="left:953.39px;top:387.04px;width:40px;font-size:7.8px;line-height:10.92px;color:#8a8a8a;font-weight:normal;text-align:center;">20:00</div>
<div class="b" style="left:610.70px;top:271.40px;width:140.60px;height:14.30px;border:1px solid #ededed;border-radius:3px;background:#fff;"></div>
<svg width="12" height="8" style="left:615px;top:275.5px"><line x1="0.5" y1="4" x2="11" y2="4" stroke="#33cc11" stroke-width="3"/><circle cx="5.7" cy="4" r="3.3" fill="#33cc11"/></svg>
<div class="t" style="left:629.00px;top:274.41px;width:600px;font-size:8.3px;line-height:11.62px;color:#a3a3a3;font-weight:normal;text-align:left;">Total</div>
<svg width="12" height="8" style="left:650px;top:275.5px"><line x1="0.5" y1="4" x2="11" y2="4" stroke="#f26a21" stroke-width="3"/><circle cx="5.7" cy="4" r="3.3" fill="#f26a21"/></svg>
<div class="t" style="left:664.00px;top:274.41px;width:600px;font-size:8.3px;line-height:11.62px;color:#a3a3a3;font-weight:normal;text-align:left;">Incoming</div>
<svg width="12" height="8" style="left:701px;top:275.5px"><line x1="0.5" y1="4" x2="11" y2="4" stroke="#2db8f5" stroke-width="3"/><circle cx="5.7" cy="4" r="3.3" fill="#2db8f5"/></svg>
<div class="t" style="left:714.00px;top:274.41px;width:600px;font-size:8.3px;line-height:11.62px;color:#a3a3a3;font-weight:normal;text-align:left;">Outgoing</div>
<svg width="1200" height="695" style="left:0;top:0">
<line x1="452.25" y1="459.0" x2="452.25" y2="652.8" stroke="#d6d6d6" stroke-width="1"/>
<line x1="409.50" y1="459.0" x2="409.50" y2="652.8" stroke="#d6d6d6" stroke-width="1"/>
<line x1="366.75" y1="459.0" x2="366.75" y2="652.8" stroke="#d6d6d6" stroke-width="1"/>
<line x1="324.00" y1="459.0" x2="324.00" y2="652.8" stroke="#d6d6d6" stroke-width="1"/>
<line x1="281.25" y1="459.0" x2="281.25" y2="652.8" stroke="#d6d6d6" stroke-width="1"/>
<line x1="238.50" y1="459.0" x2="238.50" y2="652.8" stroke="#c6d3e0" stroke-width="1"/>
<line x1="495.0" y1="459.0" x2="495.0" y2="652.8" stroke="#d6d6d6" stroke-width="1"/>
<rect x="285.17" y="461.90" width="209.83" height="9" fill="#666666"/>
<rect x="285.17" y="461.90" width="72.41" height="9" fill="#33e02a"/>
<rect x="375.29" y="475.74" width="119.71" height="9" fill="#666666"/>
<rect x="375.29" y="475.74" width="49.99" height="9" fill="#f7621b"/>
<rect x="434.47" y="489.58" width="60.53" height="9" fill="#666666"/>
<rect x="434.47" y="489.58" width="38.78" height="9" fill="#2ab8ff"/>
<rect x="442.54" y="503.42" width="52.46" height="9" fill="#666666"/>
<rect x="442.54" y="503.42" width="52.46" height="9" fill="#555555"/>
<rect x="442.54" y="503.42" width="49.77" height="9" fill="#3b3b3b"/>
<rect x="443.44" y="517.26" width="51.56" height="9" fill="#666666"/>
<rect x="443.44" y="517.26" width="42.82" height="9" fill="#444444"/>
<rect x="453.98" y="531.10" width="41.02" height="9" fill="#666666"/>
<rect x="470.34" y="544.94" width="24.66" height="9" fill="#666666"/>
<rect x="473.26" y="558.78" width="21.74" height="9" fill="#666666"/>
<rect x="492.85" y="572.62" width="2.15" height="9" fill="#666666"/>
<rect x="493.19" y="586.46" width="1.81" height="9" fill="#666666"/>
<rect x="493.48" y="600.30" width="1.52" height="9" fill="#666666"/>
<rect x="493.60" y="614.14" width="1.40" height="9" fill="#666666"/>
<rect x="494.39" y="627.98" width="0.61" height="9" fill="#666666"/>
<rect x="494.64" y="641.82" width="0.36" height="9" fill="#666666"/>
<rect x="297" y="472.7" width="89.6" height="25.4" rx="3" ry="3" fill="#ffffff" stroke="#505050" stroke-width="1.3"/>
</svg>
<div class="t" style="left:300.80px;top:475.63px;width:600px;font-size:8.0px;line-height:11.2px;color:#444;font-weight:bold;text-align:left;">Luke Skywalker</div>
<div class="t" style="left:300.80px;top:484.82px;width:600px;font-size:8.2px;line-height:11.48px;color:#444;font-weight:normal;text-align:left;"><span style="color:#3ccc33">youtube.com</span>: 32.3 MB</div>
<div class="t" style="left:465.00px;top:654.67px;width:60px;font-size:7.2px;line-height:10.08px;color:#8a8a8a;font-weight:normal;text-align:center;">0 B</div>
<div class="t" style="left:422.25px;top:654.67px;width:60px;font-size:7.2px;line-height:10.08px;color:#8a8a8a;font-weight:normal;text-align:center;">19.1 MB</div>
<div class="t" style="left:379.50px;top:654.67px;width:60px;font-size:7.2px;line-height:10.08px;color:#8a8a8a;font-weight:normal;text-align:center;">38.1 MB</div>
<div class="t" style="left:336.75px;top:654.67px;width:60px;font-size:7.2px;line-height:10.08px;color:#8a8a8a;font-weight:normal;text-align:center;">57.2 MB</div>
<div class="t" style="left:294.00px;top:654.67px;width:60px;font-size:7.2px;line-height:10.08px;color:#8a8a8a;font-weight:normal;text-align:center;">76.3 MB</div>
<div class="t" style="left:251.25px;top:654.67px;width:60px;font-size:7.2px;line-height:10.08px;color:#8a8a8a;font-weight:normal;text-align:center;">95.4 MB</div>
<div class="t" style="left:209.50px;top:654.67px;width:60px;font-size:7.2px;line-height:10.08px;color:#8a8a8a;font-weight:normal;text-align:center;clip-path:inset(0 0 0 18.10px);">114.4 MB</div>
<div class="b" style="left:513.00px;top:446.50px;width:666.00px;height:13.50px;background:linear-gradient(#fdfdfd,#efefef);"></div>
<div class="b" style="left:923.40px;top:446.50px;width:1.00px;height:13.50px;background:#dedede;"></div>
<div class="b" style="left:979.70px;top:446.50px;width:1.00px;height:13.50px;background:#dedede;"></div>
<div class="b" style="left:1053.50px;top:446.50px;width:1.00px;height:13.50px;background:#dedede;"></div>
<div class="b" style="left:1115.80px;top:446.50px;width:1.00px;height:13.50px;background:#dedede;"></div>
<div class="t" style="left:619.20px;top:447.65px;width:200px;font-size:7.6px;line-height:10.64px;color:#333;font-weight:bold;text-align:center;">User</div>
<div class="t" style="left:852.55px;top:447.65px;width:200px;font-size:7.6px;line-height:10.64px;color:#333;font-weight:bold;text-align:center;">Total Size</div>
<div class="t" style="left:917.60px;top:447.65px;width:200px;font-size:7.6px;line-height:10.64px;color:#333;font-weight:bold;text-align:center;">Download Size</div>
<div class="t" style="left:985.65px;top:447.65px;width:200px;font-size:7.6px;line-height:10.64px;color:#333;font-weight:bold;text-align:center;">Upload Size</div>
<div class="t" style="left:1048.40px;top:447.65px;width:200px;font-size:7.6px;line-height:10.64px;color:#333;font-weight:bold;text-align:center;">Browsing Time</div>
<div class="b" style="left:513.00px;top:473.30px;width:666.00px;height:1.00px;background:#ececec;"></div>
<div class="t" style="left:515.80px;top:461.75px;width:600px;font-size:7.5px;line-height:10.5px;color:#111;font-weight:bold;text-align:left;">Luke Skywalker</div>
<div class="t" style="left:896.90px;top:461.65px;width:80px;font-size:7.6px;line-height:10.64px;color:#111;font-weight:bold;text-align:right;">93.6 MB</div>
<div class="t" style="left:970.70px;top:461.65px;width:80px;font-size:7.6px;line-height:10.64px;color:#111;font-weight:bold;text-align:right;">77.7 MB</div>
<div class="t" style="left:1033.00px;top:461.65px;width:80px;font-size:7.6px;line-height:10.64px;color:#111;font-weight:bold;text-align:right;">15.9 MB</div>
<div class="t" style="left:1096.20px;top:461.65px;width:80px;font-size:7.6px;line-height:10.64px;color:#111;font-weight:bold;text-align:right;">04:12:02</div>
<div class="b" style="left:513.00px;top:487.16px;width:666.00px;height:1.00px;background:#ececec;"></div>
<div class="t" style="left:515.80px;top:475.61px;width:600px;font-size:7.5px;line-height:10.5px;color:#111;font-weight:bold;text-align:left;">C-3PO</div>
<div class="t" style="left:896.90px;top:475.51px;width:80px;font-size:7.6px;line-height:10.64px;color:#111;font-weight:bold;text-align:right;">53.4 MB</div>
<div class="t" style="left:970.70px;top:475.51px;width:80px;font-size:7.6px;line-height:10.64px;color:#111;font-weight:bold;text-align:right;">46.7 MB</div>
<div class="t" style="left:1033.00px;top:475.51px;width:80px;font-size:7.6px;line-height:10.64px;color:#111;font-weight:bold;text-align:right;">6.7 MB</div>
<div class="t" style="left:1096.20px;top:475.51px;width:80px;font-size:7.6px;line-height:10.64px;color:#111;font-weight:bold;text-align:right;">00:03:13</div>
<div class="b" style="left:513.00px;top:501.02px;width:666.00px;height:1.00px;background:#ececec;"></div>
<div class="t" style="left:515.80px;top:489.47px;width:600px;font-size:7.5px;line-height:10.5px;color:#111;font-weight:bold;text-align:left;">Darth Maul</div>
<div class="t" style="left:896.90px;top:489.37px;width:80px;font-size:7.6px;line-height:10.64px;color:#111;font-weight:bold;text-align:right;">27.0 MB</div>
<div class="t" style="left:970.70px;top:489.37px;width:80px;font-size:7.6px;line-height:10.64px;color:#111;font-weight:bold;text-align:right;">23.6 MB</div>
<div class="t" style="left:1033.00px;top:489.37px;width:80px;font-size:7.6px;line-height:10.64px;color:#111;font-weight:bold;text-align:right;">3.4 MB</div>
<div class="t" style="left:1096.20px;top:489.37px;width:80px;font-size:7.6px;line-height:10.64px;color:#111;font-weight:bold;text-align:right;">00:02:42</div>
<div class="b" style="left:513.00px;top:514.88px;width:666.00px;height:1.00px;background:#ececec;"></div>
<div class="t" style="left:515.80px;top:503.33px;width:600px;font-size:7.5px;line-height:10.5px;color:#111;font-weight:bold;text-align:left;">Grand Moff Tarkin</div>
<div class="t" style="left:896.90px;top:503.23px;width:80px;font-size:7.6px;line-height:10.64px;color:#111;font-weight:bold;text-align:right;">23.4 MB</div>
<div class="t" style="left:970.70px;top:503.23px;width:80px;font-size:7.6px;line-height:10.64px;color:#111;font-weight:bold;text-align:right;">20.4 MB</div>
<div class="t" style="left:1033.00px;top:503.23px;width:80px;font-size:7.6px;line-height:10.64px;color:#111;font-weight:bold;text-align:right;">2.9 MB</div>
<div class="t" style="left:1096.20px;top:503.23px;width:80px;font-size:7.6px;line-height:10.64px;color:#111;font-weight:bold;text-align:right;">00:03:13</div>
<div class="b" style="left:513.00px;top:528.74px;width:666.00px;height:1.00px;background:#ececec;"></div>
<div class="t" style="left:515.80px;top:517.19px;width:600px;font-size:7.5px;line-height:10.5px;color:#111;font-weight:bold;text-align:left;">Princess Leia</div>
<div class="t" style="left:896.90px;top:517.09px;width:80px;font-size:7.6px;line-height:10.64px;color:#111;font-weight:bold;text-align:right;">23.0 MB</div>
<div class="t" style="left:970.70px;top:517.09px;width:80px;font-size:7.6px;line-height:10.64px;color:#111;font-weight:bold;text-align:right;">20.1 MB</div>
<div class="t" style="left:1033.00px;top:517.09px;width:80px;font-size:7.6px;line-height:10.64px;color:#111;font-weight:bold;text-align:right;">2.9 MB</div>
<div class="t" style="left:1096.20px;top:517.09px;width:80px;font-size:7.6px;line-height:10.64px;color:#111;font-weight:bold;text-align:right;">00:03:12</div>
<div class="b" style="left:513.00px;top:542.60px;width:666.00px;height:1.00px;background:#ececec;"></div>
<div class="t" style="left:515.80px;top:531.05px;width:600px;font-size:7.5px;line-height:10.5px;color:#111;font-weight:bold;text-align:left;">Padmé Amidala</div>
<div class="t" style="left:896.90px;top:530.95px;width:80px;font-size:7.6px;line-height:10.64px;color:#111;font-weight:bold;text-align:right;">18.3 MB</div>
<div class="t" style="left:970.70px;top:530.95px;width:80px;font-size:7.6px;line-height:10.64px;color:#111;font-weight:bold;text-align:right;">16.0 MB</div>
<div class="t" style="left:1033.00px;top:530.95px;width:80px;font-size:7.6px;line-height:10.64px;color:#111;font-weight:bold;text-align:right;">2.3 MB</div>
<div class="t" style="left:1096.20px;top:530.95px;width:80px;font-size:7.6px;line-height:10.64px;color:#111;font-weight:bold;text-align:right;">00:03:08</div>
<div class="b" style="left:513.00px;top:556.46px;width:666.00px;height:1.00px;background:#ececec;"></div>
<div class="t" style="left:515.80px;top:544.91px;width:600px;font-size:7.5px;line-height:10.5px;color:#111;font-weight:bold;text-align:left;">Anakin Skywalker</div>
<div class="t" style="left:896.90px;top:544.81px;width:80px;font-size:7.6px;line-height:10.64px;color:#111;font-weight:bold;text-align:right;">11.0 MB</div>
<div class="t" style="left:970.70px;top:544.81px;width:80px;font-size:7.6px;line-height:10.64px;color:#111;font-weight:bold;text-align:right;">9.6 MB</div>
<div class="t" style="left:1033.00px;top:544.81px;width:80px;font-size:7.6px;line-height:10.64px;color:#111;font-weight:bold;text-align:right;">1.4 MB</div>
<div class="t" style="left:1096.20px;top:544.81px;width:80px;font-size:7.6px;line-height:10.64px;color:#111;font-weight:bold;text-align:right;">00:03:12</div>
<div class="b" style="left:513.00px;top:570.32px;width:666.00px;height:1.00px;background:#ececec;"></div>
<div class="t" style="left:515.80px;top:558.77px;width:600px;font-size:7.5px;line-height:10.5px;color:#111;font-weight:bold;text-align:left;">Jango Fett</div>
<div class="t" style="left:896.90px;top:558.67px;width:80px;font-size:7.6px;line-height:10.64px;color:#111;font-weight:bold;text-align:right;">9.7 MB</div>
<div class="t" style="left:970.70px;top:558.67px;width:80px;font-size:7.6px;line-height:10.64px;color:#111;font-weight:bold;text-align:right;">8.5 MB</div>
<div class="t" style="left:1033.00px;top:558.67px;width:80px;font-size:7.6px;line-height:10.64px;color:#111;font-weight:bold;text-align:right;">1.2 MB</div>
<div class="t" style="left:1096.20px;top:558.67px;width:80px;font-size:7.6px;line-height:10.64px;color:#111;font-weight:bold;text-align:right;">00:03:07</div>
<div class="b" style="left:513.00px;top:584.18px;width:666.00px;height:1.00px;background:#ececec;"></div>
<div class="t" style="left:515.80px;top:572.63px;width:600px;font-size:7.5px;line-height:10.5px;color:#111;font-weight:bold;text-align:left;">Han Solo</div>
<div class="t" style="left:896.90px;top:572.53px;width:80px;font-size:7.6px;line-height:10.64px;color:#111;font-weight:bold;text-align:right;">980.6 KB</div>
<div class="t" style="left:970.70px;top:572.53px;width:80px;font-size:7.6px;line-height:10.64px;color:#111;font-weight:bold;text-align:right;">858.1 KB</div>
<div class="t" style="left:1033.00px;top:572.53px;width:80px;font-size:7.6px;line-height:10.64px;color:#111;font-weight:bold;text-align:right;">122.6 KB</div>
<div class="t" style="left:1096.20px;top:572.53px;width:80px;font-size:7.6px;line-height:10.64px;color:#111;font-weight:bold;text-align:right;">00:03:08</div>
<div class="b" style="left:513.00px;top:598.04px;width:666.00px;height:1.00px;background:#ececec;"></div>
<div class="t" style="left:515.80px;top:586.49px;width:600px;font-size:7.5px;line-height:10.5px;color:#111;font-weight:bold;text-align:left;">Greedo</div>
<div class="t" style="left:896.90px;top:586.39px;width:80px;font-size:7.6px;line-height:10.64px;color:#111;font-weight:bold;text-align:right;">827.1 KB</div>
<div class="t" style="left:970.70px;top:586.39px;width:80px;font-size:7.6px;line-height:10.64px;color:#111;font-weight:bold;text-align:right;">723.7 KB</div>
<div class="t" style="left:1033.00px;top:586.39px;width:80px;font-size:7.6px;line-height:10.64px;color:#111;font-weight:bold;text-align:right;">103.4 KB</div>
<div class="t" style="left:1096.20px;top:586.39px;width:80px;font-size:7.6px;line-height:10.64px;color:#111;font-weight:bold;text-align:right;">00:03:13</div>
<div class="b" style="left:513.00px;top:611.90px;width:666.00px;height:1.00px;background:#ececec;"></div>
<div class="t" style="left:515.80px;top:600.35px;width:600px;font-size:7.5px;line-height:10.5px;color:#111;font-weight:bold;text-align:left;">Boba Fett</div>
<div class="t" style="left:896.90px;top:600.25px;width:80px;font-size:7.6px;line-height:10.64px;color:#111;font-weight:bold;text-align:right;">696.4 KB</div>
<div class="t" style="left:970.70px;top:600.25px;width:80px;font-size:7.6px;line-height:10.64px;color:#111;font-weight:bold;text-align:right;">609.4 KB</div>
<div class="t" style="left:1033.00px;top:600.25px;width:80px;font-size:7.6px;line-height:10.64px;color:#111;font-weight:bold;text-align:right;">87.0 KB</div>
<div class="t" style="left:1096.20px;top:600.25px;width:80px;font-size:7.6px;line-height:10.64px;color:#111;font-weight:bold;text-align:right;">00:03:03</div>
<div class="b" style="left:513.00px;top:625.76px;width:666.00px;height:1.00px;background:#ececec;"></div>
<div class="t" style="left:515.80px;top:614.21px;width:600px;font-size:7.5px;line-height:10.5px;color:#111;font-weight:bold;text-align:left;">Palpatine</div>
<div class="t" style="left:896.90px;top:614.11px;width:80px;font-size:7.6px;line-height:10.64px;color:#111;font-weight:bold;text-align:right;">640.7 KB</div>
<div class="t" style="left:970.70px;top:614.11px;width:80px;font-size:7.6px;line-height:10.64px;color:#111;font-weight:bold;text-align:right;">560.7 KB</div>
<div class="t" style="left:1033.00px;top:614.11px;width:80px;font-size:7.6px;line-height:10.64px;color:#111;font-weight:bold;text-align:right;">80.1 KB</div>
<div class="t" style="left:1096.20px;top:614.11px;width:80px;font-size:7.6px;line-height:10.64px;color:#111;font-weight:bold;text-align:right;">00:03:02</div>
<div class="b" style="left:513.00px;top:639.62px;width:666.00px;height:1.00px;background:#ececec;"></div>
<div class="t" style="left:515.80px;top:628.07px;width:600px;font-size:7.5px;line-height:10.5px;color:#111;font-weight:bold;text-align:left;">Qui-Gon Jinn</div>
<div class="t" style="left:896.90px;top:627.97px;width:80px;font-size:7.6px;line-height:10.64px;color:#111;font-weight:bold;text-align:right;">280.9 KB</div>
<div class="t" style="left:970.70px;top:627.97px;width:80px;font-size:7.6px;line-height:10.64px;color:#111;font-weight:bold;text-align:right;">245.8 KB</div>
<div class="t" style="left:1033.00px;top:627.97px;width:80px;font-size:7.6px;line-height:10.64px;color:#111;font-weight:bold;text-align:right;">35.1 KB</div>
<div class="t" style="left:1096.20px;top:627.97px;width:80px;font-size:7.6px;line-height:10.64px;color:#111;font-weight:bold;text-align:right;">00:03:08</div>
<div class="b" style="left:513.00px;top:653.48px;width:666.00px;height:1.00px;background:#ececec;"></div>
<div class="t" style="left:515.80px;top:641.93px;width:600px;font-size:7.5px;line-height:10.5px;color:#111;font-weight:bold;text-align:left;">Jabba the Hutt</div>
<div class="t" style="left:896.90px;top:641.83px;width:80px;font-size:7.6px;line-height:10.64px;color:#111;font-weight:bold;text-align:right;">166.2 KB</div>
<div class="t" style="left:970.70px;top:641.83px;width:80px;font-size:7.6px;line-height:10.64px;color:#111;font-weight:bold;text-align:right;">145.4 KB</div>
<div class="t" style="left:1033.00px;top:641.83px;width:80px;font-size:7.6px;line-height:10.64px;color:#111;font-weight:bold;text-align:right;">20.8 KB</div>
<div class="t" style="left:1096.20px;top:641.83px;width:80px;font-size:7.6px;line-height:10.64px;color:#111;font-weight:bold;text-align:right;">00:03:06</div>
<svg width="1200" height="695" style="left:0;top:0"><circle cx="25.1" cy="14.4" r="5.3" fill="none" stroke="#dedede" stroke-width="1.25"/>
<path d="M21.2 16.6 A4.1 4.1 0 1 1 29 16.6 Z" fill="#4a4a4a"/>
<path d="M22.6 16.4 A2.7 2.7 0 1 1 27.6 16.4 Z" fill="#1d1d1d"/>
<path d="M22 13.2 L23 13.8 M23.3 11.4 L23.9 12.4 M25.1 10.8 V11.9 M26.9 11.4 L26.3 12.4 M28.2 13.2 L27.2 13.8" stroke="#aaa" stroke-width="0.7"/>
<path d="M24.2 16.3 L26.9 12.1 L26 16.6 Z" fill="#f0f0f0"/>
<path d="M104 16.9 H115 V18.2 H104 Z" fill="#000"/>
<rect x="104.3" y="14.5" width="2.60" height="3.70" rx="1" fill="#000"/>
<rect x="107.3" y="12.6" width="2.30" height="5.60" rx="1" fill="#000"/>
<rect x="110.1" y="8.0" width="2.10" height="10.20" rx="1" fill="#000"/>
<rect x="112.7" y="10.9" width="2.10" height="7.30" rx="1" fill="#000"/>
<path d="M185.8 11.9 L198.2 8.7 L198.2 17 L185.8 13.9 Z" fill="#dcdcdc"/>
<path d="M187.6 13.3 L190.2 13.9 L190.2 18 L188 18 Z" fill="#dcdcdc"/>
<rect x="196.6" y="9" width="1.6" height="7.8" fill="#a8a8a8"/>
<rect x="263.65" y="8.60" width="1.5" height="8.00" fill="#dcdcdc" transform="rotate(0.0 264.4 12.6)"/><rect x="263.65" y="8.60" width="1.5" height="8.00" fill="#dcdcdc" transform="rotate(45.0 264.4 12.6)"/><rect x="263.65" y="8.60" width="1.5" height="8.00" fill="#dcdcdc" transform="rotate(90.0 264.4 12.6)"/><rect x="263.65" y="8.60" width="1.5" height="8.00" fill="#dcdcdc" transform="rotate(135.0 264.4 12.6)"/><rect x="263.65" y="8.60" width="1.5" height="8.00" fill="#dcdcdc" transform="rotate(180.0 264.4 12.6)"/><rect x="263.65" y="8.60" width="1.5" height="8.00" fill="#dcdcdc" transform="rotate(225.0 264.4 12.6)"/><rect x="263.65" y="8.60" width="1.5" height="8.00" fill="#dcdcdc" transform="rotate(270.0 264.4 12.6)"/><rect x="263.65" y="8.60" width="1.5" height="8.00" fill="#dcdcdc" transform="rotate(315.0 264.4 12.6)"/><circle cx="264.4" cy="12.6" r="3.4" fill="#dcdcdc"/><circle cx="264.4" cy="12.6" r="1.55" fill="#1d1d1d"/>
<rect x="268.45" y="14.90" width="1.5" height="5.00" fill="#dcdcdc" transform="rotate(0.0 269.2 17.4)"/><rect x="268.45" y="14.90" width="1.5" height="5.00" fill="#dcdcdc" transform="rotate(60.0 269.2 17.4)"/><rect x="268.45" y="14.90" width="1.5" height="5.00" fill="#dcdcdc" transform="rotate(120.0 269.2 17.4)"/><rect x="268.45" y="14.90" width="1.5" height="5.00" fill="#dcdcdc" transform="rotate(180.0 269.2 17.4)"/><rect x="268.45" y="14.90" width="1.5" height="5.00" fill="#dcdcdc" transform="rotate(240.0 269.2 17.4)"/><rect x="268.45" y="14.90" width="1.5" height="5.00" fill="#dcdcdc" transform="rotate(300.0 269.2 17.4)"/><circle cx="269.2" cy="17.4" r="2.1" fill="#dcdcdc"/><circle cx="269.2" cy="17.4" r="0.9" fill="#1d1d1d"/>
<path d="M23.9 40.8 L23.9 37 A3.9 3.9 0 0 1 27.8 40.8 Z" fill="#fff"/>
<path d="M23.3 41.4 L26.9 43.6 A3.9 3.9 0 1 1 23.3 37.5 Z" fill="#fff"/>
<path d="M23.3 41.4 L27.8 41.4 A3.9 3.9 0 0 1 26.9 43.6 Z" fill="#fff"/>
<path d="M22.2 38.8 L20.6 40.8 M23.3 41.4 L21.8 44" stroke="#84c424" stroke-width="0.9"/>
<ellipse cx="117.8" cy="39.9" rx="1.8" ry="2.2" fill="#555"/>
<path d="M114 45 Q114.6 42.9 116.6 42.3 L119 42.3 Q121.1 42.9 121.7 45 Z" fill="#555"/>
<rect x="222.6" y="37.6" width="7.3" height="7.7" rx="0.8" fill="#9a9a9a"/>
<rect x="222.6" y="37.6" width="7.3" height="1.5" fill="#444"/>
<rect x="223.5" y="39.5" width="5.5" height="4.9" fill="#bdbdbd"/>
<rect x="226.3" y="41.2" width="1.8" height="2.2" fill="#666"/>
<path d="M793.1 29.8 H795.2 V32.6 L798 32.6 L794.15 36.9 L790.3 32.6 L793.1 32.6 Z" fill="#555566" stroke="#555566" stroke-width="0.3" stroke-linejoin="round"/>
<rect x="1179.75" y="38.30" width="1.5" height="6.20" fill="#484848" transform="rotate(0.0 1180.5 41.4)"/><rect x="1179.75" y="38.30" width="1.5" height="6.20" fill="#484848" transform="rotate(45.0 1180.5 41.4)"/><rect x="1179.75" y="38.30" width="1.5" height="6.20" fill="#484848" transform="rotate(90.0 1180.5 41.4)"/><rect x="1179.75" y="38.30" width="1.5" height="6.20" fill="#484848" transform="rotate(135.0 1180.5 41.4)"/><rect x="1179.75" y="38.30" width="1.5" height="6.20" fill="#484848" transform="rotate(180.0 1180.5 41.4)"/><rect x="1179.75" y="38.30" width="1.5" height="6.20" fill="#484848" transform="rotate(225.0 1180.5 41.4)"/><rect x="1179.75" y="38.30" width="1.5" height="6.20" fill="#484848" transform="rotate(270.0 1180.5 41.4)"/><rect x="1179.75" y="38.30" width="1.5" height="6.20" fill="#484848" transform="rotate(315.0 1180.5 41.4)"/><circle cx="1180.5" cy="41.4" r="2.3" fill="#484848"/><circle cx="1180.5" cy="41.4" r="1.0" fill="#f1f1f1"/>
<circle cx="1055.8" cy="74.7" r="3.2" fill="none" stroke="#555" stroke-width="1.2"/>
<path d="M1055.6 72.4 V75.2 H1057.3" fill="none" stroke="#555" stroke-width="0.9"/>
<rect x="1114" y="71" width="3.6" height="3.2" fill="#555"/>
<rect x="1111.9" y="74" width="7.6" height="3.8" rx="0.6" fill="#555"/>
<rect x="1114" y="77.2" width="3.6" height="2" fill="#777"/>
<rect x="1114" y="75.1" width="3.6" height="0.6" fill="#ddd"/>
<path d="M1157.8 72.3 H1156.6 Q1155.2 72.3 1155.2 73.8 V77.2 Q1155.2 78.7 1156.6 78.7 H1160 Q1161.4 78.7 1161.4 77.2 V76.4" fill="none" stroke="#555" stroke-width="1.3"/>
<path d="M1157.2 76.6 Q1157.5 74.3 1159.8 74 V72.6 L1162.3 74.7 L1159.8 76.8 V75.5 Q1158.3 75.5 1157.2 76.6 Z" fill="#555"/>
<path d="M1067.5 6.2 L1073.8 6.2 L1072.3 8.6 L1074.6 10.8 L1079.8 6.2 L1081.2 6.2 L1076 12.3 L1075.4 17.3 Z" fill="#7cc440"/>
<path d="M1083.8 6.3 L1082 6.3 L1076.1 11.6 L1076.1 17.6 Z" fill="#ffffff"/>
<rect x="1136" y="2" width="0.9" height="20" fill="#bbbbbb"/></svg>
<div class="t" style="left:1083.90px;top:3.37px;width:600px;font-size:13.5px;line-height:18.9px;color:#ffffff;font-weight:bold;text-align:left;">fast<span style="color:#7cc440">vue</span></div>
<div class="t" style="left:1140.80px;top:0.44px;width:600px;font-size:12.0px;line-height:16.8px;color:#74c23c;font-weight:bold;text-align:left;-webkit-text-stroke:0px;">Reporter</div>
<div class="t" style="left:1141.00px;top:14.20px;width:600px;font-size:6.5px;line-height:9.1px;color:#ffffff;font-weight:bold;text-align:left;">for FortiGate</div>
</body></html>
